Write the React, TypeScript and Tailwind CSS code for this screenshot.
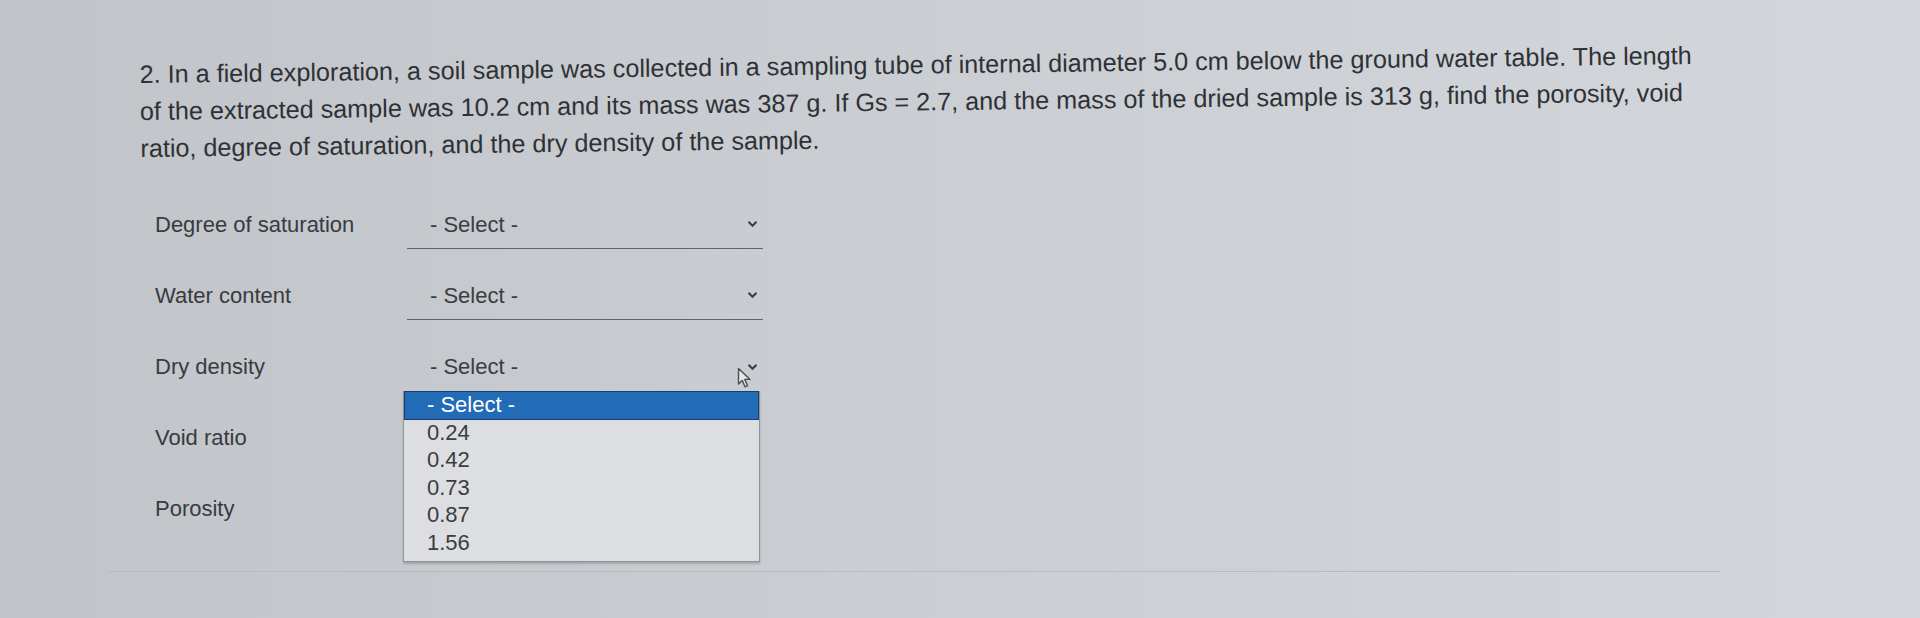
import React from "react";

const rows = [
  { label: "Degree of saturation", line: true },
  { label: "Water content", line: true },
  { label: "Dry density", line: false, open: true },
  { label: "Void ratio", hidden: true },
  { label: "Porosity", hidden: true },
];

const options = ["0.24", "0.42", "0.73", "0.87", "1.56"];

function Chevron() {
  return (
    <svg width="11" height="8" viewBox="0 0 11 8" className="shrink-0">
      <path d="M1.5 1.8 L5.5 5.8 L9.5 1.8" fill="none" stroke="#3a3d42" strokeWidth="2" />
    </svg>
  );
}

function Cursor() {
  return (
    <svg width="16" height="22" viewBox="0 0 16 22" className="absolute left-[330px] top-[24px] z-20">
      <path
        d="M1.5 1.5 L1.5 17 L5.2 13.4 L8 19.8 L10.6 18.7 L7.8 12.4 L13 12.4 Z"
        fill="#e4e6e8"
        stroke="#4a4d52"
        strokeWidth="1.4"
        strokeLinejoin="round"
      />
    </svg>
  );
}

function Dropdown() {
  return (
    <div className="absolute z-10 left-[-4px] top-full w-[357px] bg-[#dcdee1] border-x border-b border-[#8f9296] shadow-[0_2px_2px_rgba(0,0,0,0.18)] pb-[4px]">
      <div className="h-[29px] bg-[#226bb7] border border-[#1b3d68] text-white pl-[22px] leading-[26px]">
        - Select -
      </div>
      {options.map((o) => (
        <div key={o} className="h-[27.5px] leading-[26px] pl-[23px] text-[#3a3d42]">
          {o}
        </div>
      ))}
    </div>
  );
}

export default function App() {
  return (
    <div className="w-full h-[618px] overflow-hidden bg-linear-to-r from-[#c1c4c8] via-[#cbced2] to-[#d3d6da] text-[#2e3136] font-['Liberation_Sans',Arial,sans-serif]">
      {/* question */}
      <div className="pl-[140px] pt-[56px]">
        <p className="text-[25.2px] leading-[37px] whitespace-nowrap origin-left -rotate-[0.7deg]">
          2. In a field exploration, a soil sample was collected in a sampling tube of internal diameter 5.0 cm below the ground water table. The length
          <br />
          of the extracted sample was 10.2 cm and its mass was 387 g. If Gs = 2.7, and the mass of the dried sample is 313 g, find the porosity, void
          <br />
          ratio, degree of saturation, and the dry density of the sample.
        </p>
      </div>

      {/* answers */}
      <div className="pl-[155px] mt-[22px] text-[22px]">
        {rows.map((r) => (
          <div key={r.label} className="h-[71px] flex items-center">
            <div className="w-[252px] text-[#383b40]">{r.label}</div>
            {r.hidden ? (
              <div className="w-[356px] h-[48px]" />
            ) : (
              <div
                className={`relative w-[356px] h-[48px] flex items-center justify-between pl-[23px] pr-[5px] ${
                  r.line ? "border-b border-[#5f6267]" : ""
                }`}
              >
                <span className="text-[#3a3d42]">- Select -</span>
                <Chevron />
                {r.open && (
                  <>
                    <Dropdown />
                    <Cursor />
                  </>
                )}
              </div>
            )}
          </div>
        ))}
      </div>

      <div className="ml-[108px] w-[1612px] mt-[27px] h-px bg-[#b7babe]" />
    </div>
  );
}
